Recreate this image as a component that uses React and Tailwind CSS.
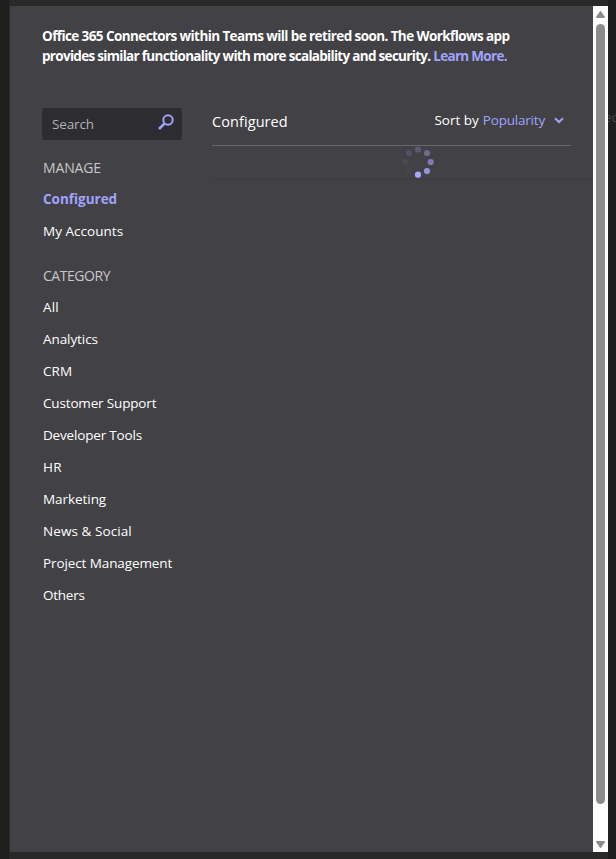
import React from "react";

const manageLinks = [
  { label: "Configured", style: "font-bold text-[#a1a3fb] tracking-[-0.02px]" },
  { label: "My Accounts", style: "text-white tracking-[0.03px]" },
];

const categories = [
  { label: "All", style: "tracking-[0.1px]" },
  { label: "Analytics", style: "tracking-[-0.08px]" },
  { label: "CRM", style: "tracking-[0.1px]" },
  { label: "Customer Support", style: "tracking-[-0.16px]" },
  { label: "Developer Tools", style: "tracking-[-0.18px]" },
  { label: "HR", style: "tracking-[0.2px]" },
  { label: "Marketing", style: "tracking-[-0.06px]" },
  { label: "News & Social", style: "tracking-[0.07px]" },
  { label: "Project Management", style: "tracking-[-0.1px]" },
  { label: "Others", style: "tracking-[-0.25px]" },
];

const spinnerDots = [
  { cx: 16, cy: 3.5, opacity: 0.25 },
  { cx: 25, cy: 7, opacity: 0.42 },
  { cx: 28.7, cy: 16, opacity: 0.6 },
  { cx: 25, cy: 25, opacity: 0.8 },
  { cx: 16, cy: 28.7, opacity: 1 },
  { cx: 7, cy: 25, opacity: 0.04 },
  { cx: 3.3, cy: 16, opacity: 0.08 },
  { cx: 7, cy: 7, opacity: 0.16 },
];

const Spinner = () => (
  <svg className="h-8 w-8" viewBox="0 0 32 32" fill="#a6a7ff">
    {spinnerDots.map((dot, i) => (
      <circle key={i} cx={dot.cx} cy={dot.cy} r="3.1" opacity={dot.opacity} />
    ))}
  </svg>
);

const Sidebar = () => (
  <aside className="w-[140px] shrink-0 text-[13.5px]">
    <div className="flex h-8 items-center justify-between rounded-[3px] bg-[#2d2c30] pl-2.5 pr-2 text-[#b3b2b5]">
      <span className="tracking-[-0.15px]">Search</span>
      <svg className="-mt-1 h-4 w-4" viewBox="0 0 16 16" fill="none" stroke="#a1a3fb">
        <circle cx="10" cy="6" r="4.7" strokeWidth="2" />
        <path d="M6.4 9.6L1 15" strokeWidth="2.7" />
      </svg>
    </div>

    {/* Manage */}
    <div className="pl-px">
      <h3 className="mt-3 h-8 text-sm leading-8 tracking-[-0.15px] text-[#c8c6c9]">MANAGE</h3>
      <ul className="-mt-px">
        {manageLinks.map((link) => (
          <li key={link.label} className={`h-8 cursor-pointer whitespace-nowrap leading-8 ${link.style}`}>
            {link.label}
          </li>
        ))}
      </ul>

      {/* Category */}
      <h3 className="mt-[13px] h-8 text-sm leading-8 tracking-[-0.45px] text-[#c8c6c9]">CATEGORY</h3>
      <ul className="-mt-px text-white">
        {categories.map((item) => (
          <li key={item.label} className={`h-8 cursor-pointer whitespace-nowrap leading-8 ${item.style}`}>
            {item.label}
          </li>
        ))}
      </ul>
    </div>
  </aside>
);

const Results = () => (
  <main className="w-[381px] shrink-0">
    <div className="flex h-[38px] w-[359px] justify-between border-b border-[#68676b] pr-[7px] text-white">
      <h2 className="text-[14.5px] leading-[27px] tracking-[0.08px]">Configured</h2>
      <div className="flex h-6 items-center whitespace-nowrap text-[13.5px]">
        <span>Sort by</span>
        <span className="ml-1 tracking-[-0.2px] text-[#a1a3fb]">Popularity</span>
        <svg className="ml-[9px] h-2.5 w-2.5" viewBox="0 0 10 10" fill="none" stroke="#a1a3fb" strokeWidth="2">
          <path d="M1 3.2L5 7L9 3.2" />
        </svg>
      </div>
    </div>
    <div className="flex h-[34px] justify-center border-b-2 border-[#3e3d41] pl-[31px]">
      <Spinner />
    </div>
  </main>
);

const Scrollbar = () => (
  <div className="flex w-[15px] shrink-0 flex-col items-center bg-[#fdfdfd]">
    <svg className="mt-[5px] h-[7px] w-[9px]" viewBox="0 0 9 7" fill="#8b8b8b">
      <path d="M4 0.3Q4.5 -0.1 5 0.3L8.8 5.8Q9 7 8 7H1Q0 7 0.2 5.8Z" />
    </svg>
    <div className="mt-1.5 h-[780px] w-[9px] rounded-full bg-[#8b8b8b]" />
    <svg className="mt-[37px] h-[7px] w-[9px]" viewBox="0 0 9 7" fill="#8b8b8b">
      <path d="M4 6.7Q4.5 7.1 5 6.7L8.8 1.2Q9 0 8 0H1Q0 0 0.2 1.2Z" />
    </svg>
  </div>
);

const App = () => {
  return (
    <div className="flex h-[859px] w-[616px] overflow-hidden bg-[#1f1f1f] font-['Open_Sans','Noto_Sans',sans-serif]">
      <div className="ml-[9px] flex w-[599px] shrink-0 bg-[#292929] pb-[7px] pl-px pt-1.5">
        <div className="w-[583px] shrink-0 bg-[#424145] pl-8 pt-5">
          <p className="h-[82px] whitespace-nowrap text-[13.5px] font-bold leading-5 text-white">
            <span className="block tracking-[-0.59px]">Office 365 Connectors within Teams will be retired soon. The Workflows app</span>
            <span className="block tracking-[-0.7px]">
              provides similar functionality with more scalability and security.{" "}
              <a className="cursor-pointer text-[#a1a3fb]">Learn More.</a>
            </span>
          </p>
          <div className="flex gap-[30px]">
            <Sidebar />
            <Results />
          </div>
        </div>
        <Scrollbar />
      </div>
      {/* sliver of the page behind the dialog */}
      <div className="w-2 shrink-0 overflow-hidden pt-[107px] text-[13.5px] leading-5 text-[#454545]">
        <span className="-ml-1">ec</span>
      </div>
    </div>
  );
};

export default App;
